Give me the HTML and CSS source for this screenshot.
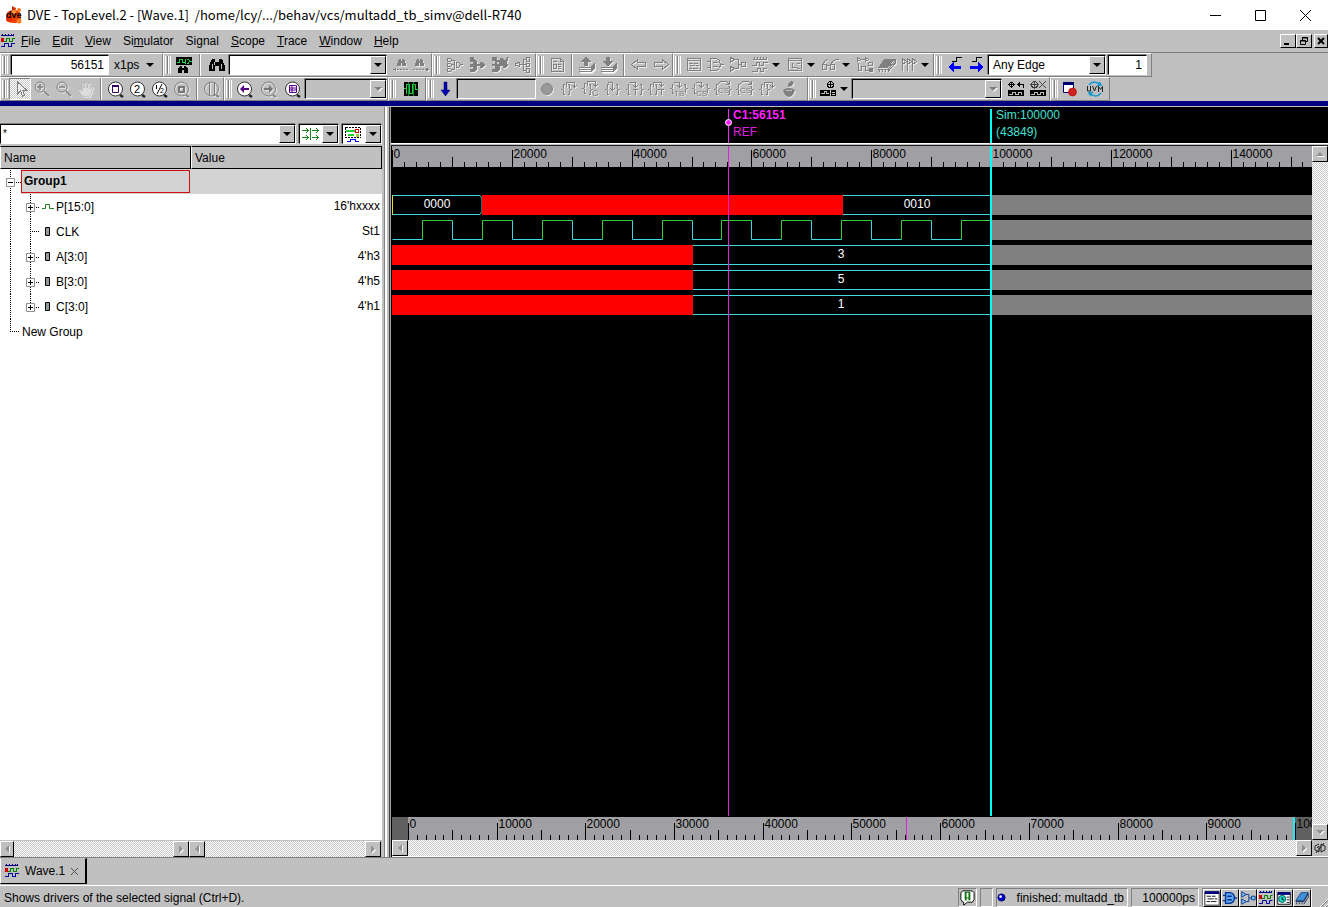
FILE: index.html
```html
<!DOCTYPE html>
<html lang="en">
<head>
<meta charset="utf-8">
<title>DVE - TopLevel.2 - [Wave.1]</title>
<link rel="stylesheet" href="styles.css">
</head>
<body>
<svg class="defs" aria-hidden="true">
  <defs>
    <symbol id="wave" viewBox="0 0 16 16"><path d="M1 2.500h13M2.500 1v2M5.500 1v2M8.500 1v2M11.500 1v2M13.500 1v2" stroke="#000080"/><path d="M1 5h3v4H1z" fill="#d00000"/><path d="M4 8.500h2.500V5.500h3v3h3V5.500h2" stroke="#008000" fill="none"/><path d="M1 13.500h3.500v-3h4v3h3v-3h3" stroke="#0000a0" fill="none"/></symbol>
    <symbol id="find" viewBox="0 0 20 20"><path d="M2 2h16v8H2z"/><path d="M3 7.500h2.500V4.500h3v3h3M11.500 3.500v5M12.500 4.500h2l1 1.500-1 2h-2M16 6.500h2" stroke="#20d040" fill="none"/><path d="M4 18v-4l2-3h2v2h2v-2h2l2 3v4h-4v-3H8v3z"/></symbol>
    <symbol id="bino" viewBox="0 0 20 20"><path d="M2 16v-5l3-7h3v3h4V4h3l3 7v5h-6v-5H8v5z"/><path d="M5.500 9v5M14.500 9v5M7.500 7v3" stroke="#c0c0c0"/></symbol>
    <symbol id="binol" viewBox="0 0 20 20"><path d="M6 9l2-5h2v2h1V4h2l2 5v2h-4V8h-1v3H6z"/><path d="M2 14.500l3-2v4z"/><path d="M3 14.500h14" stroke-dasharray="2 1" stroke="currentColor"/></symbol>
    <symbol id="binor" viewBox="0 0 20 20"><path d="M4 9l2-5h2v2h1V4h2l2 5v2H9V8H8v3H4z"/><path d="M18 14.500l-3-2v4z"/><path d="M2 14.500h14" stroke-dasharray="2 1" stroke="currentColor"/></symbol>
    <symbol id="fan1" viewBox="0 0 20 20"><path d="M3.500 3.500h3l1 1.500-1 1.500h-3zM3.500 8.500h3l1 1.500-1 1.500h-3zM3.500 13.500h3l1 1.500-1 1.500h-3zM8 5.500h2.500v9H8M8 9.500h3M12.500 7.500h2l2 2-2 3h-2zM17 9.500h2" fill="none" stroke="currentColor"/></symbol>
    <symbol id="fan2" viewBox="0 0 20 20"><path d="M3 2h4l1 3 2 1v3h3V7h3l2 3-2 3h-3v-2h-3v3l-2 2v1H3v-3h3v-2H3V9h3V7H3z"/></symbol>
    <symbol id="fan3" viewBox="0 0 20 20"><path d="M2 2h5v3h3V3h3l2 3 2-4h2l-2 5 1 3-2 3h-3v-2h-3v3l-2 3H2v-3h3v-3H2V9h3V6H2z"/><path d="M7 7h2v2H7z" fill="#d0d0d0"/></symbol>
    <symbol id="fan4" viewBox="0 0 20 20"><path d="M2.500 8.500l4-1v4l-4-1zM7 9.500h4M10.500 4v12M11 4.500h2M11 9.500h2M11 15.500h2M13.500 2.500h3v4h-3zM13.500 8.500h3v3h-3zM13.500 13.500h3v4h-3z" fill="none" stroke="currentColor"/></symbol>
    <symbol id="doc" viewBox="0 0 20 20"><path d="M4.500 3.500h9l3 3v10h-12zM13.500 3v3.500h3M6 6.500h4M6.500 9.500h3v4h-3zM11 9.500h3M11 11.500h3M11 13.500h3" fill="none" stroke="currentColor"/></symbol>
    <symbol id="up" viewBox="0 0 20 20"><path d="M9 2l6 5h-4v4H7V7H3z"/><path d="M3 13.500h11l4-4M3 15.500h11l4-4M3 17.500h11l4-4" fill="none" stroke="#fff"/><path d="M2 12.500h12l4-4M2 14.500h12l4-4M2 16.500h12l4-4" fill="none" stroke="currentColor"/></symbol>
    <symbol id="down" viewBox="0 0 20 20"><path d="M7 2h4v4h4l-6 5-6-5h4z"/><path d="M3 13.500h11l4-4M3 15.500h11l4-4M3 17.500h11l4-4" fill="none" stroke="#fff"/><path d="M2 12.500h12l4-4M2 14.500h12l4-4M2 16.500h12l4-4" fill="none" stroke="currentColor"/></symbol>
    <symbol id="left" viewBox="0 0 20 20"><path d="M8.500 4.500l-6 5 6 5v-3h8v-4h-8z" fill="none" stroke="currentColor"/></symbol>
    <symbol id="right" viewBox="0 0 20 20"><path d="M11.500 4.500l6 5-6 5v-3h-8v-4h8z" fill="none" stroke="currentColor"/></symbol>
    <symbol id="list" viewBox="0 0 20 20"><path d="M3.500 3.500h13v12h-13z" fill="none" stroke="currentColor"/><path d="M3 5.500h13M5 8.500h4M10 8.500h4M6 10.500h5M12 10.500h3M5 13.500h3M9 13.500h5" stroke="currentColor"/></symbol>
    <symbol id="gate" viewBox="0 0 20 20"><path d="M4.500 3.500h6l3 2 1 4-1 4-3 2h-6zM1 6.500h4M1 12.500h4M15 9.500h3M7 7.500h5M7 11.500h5" fill="none" stroke="currentColor"/></symbol>
    <symbol id="mux" viewBox="0 0 20 20"><path d="M2.500 2.500l4 2-4 3zM2.500 11.500l4 2-4 3zM7 4.500h3.500v9H7M11 9.500h2M13.500 7.500h4v4h-4z" fill="none" stroke="currentColor"/></symbol>
    <symbol id="waveg" viewBox="0 0 20 20"><path d="M3 4.500h14M4.500 2v3M7.500 2v3M10.500 2v3M13.500 2v3M16.500 2v3M2 10.500h4.500v-3h3v3h4v-3h4M2 16.500h5.500v-3h3v3h3v-3h3" fill="none" stroke="currentColor"/></symbol>
    <symbol id="clock" viewBox="0 0 20 20"><path d="M3.500 3.500h13v12h-13zM3 5.500h13M7.500 8v4h4M12 8.500h3M12 13.500h3" fill="none" stroke="currentColor"/></symbol>
    <symbol id="glasses" viewBox="0 0 20 20"><path d="M8 4.500L5 6l-2.500 4v4h4V9.500h-4M16 4.500L13 6l-2.500 4v4h4V9.500h-4M7 10.500h3M15.500 4.500h3" fill="none" stroke="currentColor"/></symbol>
    <symbol id="path" viewBox="0 0 20 20"><path d="M2.500 2.500l3 2-3 2zM6 4.500h4M10.500 2.500l3 2-3 2zM3.500 8v7h3v-4h4v4h3M13.500 7.500h4v3h-4z" fill="none" stroke="currentColor"/><path d="M14 13h4v4h-4z"/></symbol>
    <symbol id="chip" viewBox="0 0 20 20"><path d="M7 4h11l-7 9H1z"/><path d="M1 14.500h10l7-9v3l-7 8v-2M2.500 15v2M5.500 15v2M8.500 15v2" fill="none" stroke="currentColor"/></symbol>
    <symbol id="flags" viewBox="0 0 20 20"><path d="M3.500 16V3.500l4 3-4 3M8.500 16V3.500l4 3-4 3M13.500 16V3.500l4 3-4 3" fill="none" stroke="currentColor"/></symbol>
    <symbol id="edgel" viewBox="0 0 20 20"><path d="M7 6.500h4.500v-4h5" fill="none" stroke="#000"/><path d="M3 12l6-5v4h7v3H9v3z" fill="#00f"/></symbol>
    <symbol id="edger" viewBox="0 0 20 20"><path d="M5 6.500h4.500v-4h5" fill="none" stroke="#000"/><path d="M17 12l-6-5v4H3v3h8v3z" fill="#00f"/></symbol>
    <symbol id="pointer" viewBox="0 0 20 20"><path d="M7.500 3v12l3-3 2 5 2-1-2-5h4z" fill="#eee" stroke="currentColor"/></symbol>
    <symbol id="zin" viewBox="0 0 20 20"><circle cx="8" cy="8" r="5" fill="none" stroke="currentColor"/><path d="M5 8h6M8 5v6M12 12l5 5" stroke="currentColor" stroke-width="1.600"/></symbol>
    <symbol id="zout" viewBox="0 0 20 20"><circle cx="8" cy="8" r="5" fill="none" stroke="currentColor"/><path d="M5 8h6M12 12l5 5" stroke="currentColor" stroke-width="1.600"/></symbol>
    <symbol id="hand" viewBox="0 0 20 20"><path d="M6 17l-4-6 2-1 2 2V4h2v5l1-6h2v6l1-5h2v6l1-3 2 1-2 7-2 3z" fill="#ddd" stroke="#aaa" stroke-width=".6"/></symbol>
    <symbol id="mag" viewBox="0 0 20 20"><circle cx="9.500" cy="10" r="7" fill="#fff" stroke="#333"/><path d="M14 16l3 2" stroke="#222" stroke-width="2.500"/></symbol>
    <symbol id="magoff" viewBox="0 0 20 20"><circle cx="9.500" cy="10" r="7" fill="none" stroke="#808080"/><path d="M14 16l3 2" stroke="#808080" stroke-width="2"/></symbol>
    <symbol id="mbox" viewBox="0 0 20 20"><use href="#mag"/><path d="M6.500 6.500h6v7h-6z" fill="none" stroke="#306"/><path d="M6 7h7" stroke="#306" stroke-width="2"/></symbol>
    <symbol id="mtwo" viewBox="0 0 20 20"><use href="#mag"/><text x="6" y="14" font-size="11">2</text></symbol>
    <symbol id="mhalf" viewBox="0 0 20 20"><use href="#mag"/><path d="M12 5l-5 10M6.500 6v4" stroke="#000"/><text x="10" y="14" font-size="7">2</text></symbol>
    <symbol id="msq" viewBox="0 0 20 20"><use href="#magoff"/><path d="M7 8h5v5H7z" fill="none" stroke="#777" stroke-width="2"/></symbol>
    <symbol id="mbars" viewBox="0 0 20 20"><use href="#magoff"/><path d="M7.500 3v14M12.500 3v14" stroke="#777"/></symbol>
    <symbol id="mleft" viewBox="0 0 20 20"><use href="#mag"/><path d="M5 10l4-4v3h5v2H9v3z" fill="#508"/></symbol>
    <symbol id="mright" viewBox="0 0 20 20"><use href="#magoff"/><path d="M14 10l-4-4v3H5v2h5v3z" fill="#777"/></symbol>
    <symbol id="mlist" viewBox="0 0 20 20"><use href="#mag"/><path d="M6.500 6.500h7v7h-7zM6 9h8M6 11h8M9 6v8" fill="none" stroke="#508"/></symbol>
    <symbol id="green" viewBox="0 0 20 20"><path d="M3 3h14v14H3z"/><path d="M3 9.500h2.500v-4h3v9h3v-9h3v5h3M5.500 9v6M11.500 5v9" fill="none" stroke="#20d030"/><path d="M7.500 3v14M12.500 3v14" stroke="#084"/></symbol>
    <symbol id="bluedown" viewBox="0 0 20 20"><path d="M8 3h3v8h3l-4.500 6L5 11h3z" fill="#0000b0" stroke="#000060" stroke-width=".5"/></symbol>
    <symbol id="dot" viewBox="0 0 20 20"><circle cx="10" cy="10" r="5.500" fill="#999" stroke="#808080"/></symbol>
    <symbol id="s1" viewBox="0 0 20 20"><path d="M6 5.500H4.500v4l-1.500 1 1.500 1v4H6M9 5.500h1.500v4l1.500 1-1.500 1v4H9M7.500 8V3.500h8V8M13 6l2.500 2.500L18 6" fill="none" stroke="currentColor"/></symbol>
    <symbol id="s2" viewBox="0 0 20 20"><path d="M5 4.500H3.500v4l-1.500 1 1.500 1v4H5M8 5.500h1.500v4l1.500 1-1.500 1v4H8M6.500 7V2.500h8V7M12 5l2.500 2.500L17 5" fill="none" stroke="currentColor"/><text x="11" y="17" font-size="9">C</text></symbol>
    <symbol id="s3" viewBox="0 0 20 20"><path d="M6 5.500H4.500v4l-1.500 1 1.500 1v4H6M13 5.500h1.500v4l1.500 1-1.500 1v4H13M4.500 3.500h5V12M7 9l2.500 2.500L12 9" fill="none" stroke="currentColor"/></symbol>
    <symbol id="s4" viewBox="0 0 20 20"><path d="M4 5.500H3.500v4l-1.500 1 1.500 1v4H5M15 5.500h1.500v4l1.500 1-1.500 1v4H15M4.500 3.500h6V8M8 6l2.500 2.500L13 6M8 10.500h5M10.500 10v6" fill="none" stroke="currentColor"/></symbol>
    <symbol id="s5" viewBox="0 0 20 20"><path d="M5 5.500H3.500v4l-1.500 1 1.500 1v4H5M8 5.500h1.500v4l1.500 1-1.500 1v4H8M6.500 8V3.500h8V7M12 5l2.500 2.500L17 5M12 10.500h5M14.500 10v6" fill="none" stroke="currentColor"/></symbol>
    <symbol id="s6" viewBox="0 0 20 20"><path d="M4 5.500H3.500v3l-1.500 1 1.500 1v4H5M15 5.500h1.500v3l1.500 1-1.500 1v3M4.500 3.500h6V8M8 6l2.500 2.500L13 6" fill="none" stroke="currentColor"/><text x="5" y="17" font-size="8">TB</text></symbol>
    <symbol id="s7" viewBox="0 0 20 20"><path d="M4 5.500H3.500v3l-1.500 1 1.500 1v4H5M15 5.500h1.500v3l1.500 1-1.500 1v3M4.500 3.500h6V8M8 6l2.500 2.500L13 6" fill="none" stroke="currentColor"/><text x="5" y="17" font-size="8">CS</text></symbol>
    <symbol id="s8" viewBox="0 0 20 20"><path d="M5 5.500H3.500v4l-1.500 1 1.500 1v4H5M15 7.500h1.500v2l1.500 1-1.500 1v4H15M5 4.500l3-2h5l3 2M13 5.500h3.500V2" fill="none" stroke="currentColor"/><text x="5" y="14" font-size="8">CS</text></symbol>
    <symbol id="bird" viewBox="0 0 20 20"><path d="M4 11q6-4 12 0-2 7-6 7t-6-7M9 8V5l3-3 3 1-2 4z"/><path d="M7 11.500h6" stroke="#c0c0c0"/></symbol>
    <symbol id="addwave" viewBox="0 0 20 20"><circle cx="12.500" cy="5.500" r="3" fill="none" stroke="#000"/><path d="M9 5.500h7M12.500 2v7" stroke="#000"/><path d="M2 11h10v6H2zM13 11h5v6h-5z"/><path d="M3 14.500h3v-2h2v2h3M14 13.500h3M14 15.500h3" fill="none" stroke="#bbb"/></symbol>
    <symbol id="wback" viewBox="0 0 20 20"><circle cx="5.500" cy="5.500" r="2" fill="none" stroke="#000"/><path d="M2 5.500h7M5.500 3v6M11 5.500h6.500V9M13.500 3v5M12.500 4v3" fill="none" stroke="#000"/><path d="M2 11h16v6H2z"/><path d="M3 15.500h3v-2h3v2h3v-2h3v2" fill="none" stroke="#bbb"/></symbol>
    <symbol id="wdel" viewBox="0 0 20 20"><circle cx="6.500" cy="5.500" r="3" fill="none" stroke="#333"/><path d="M2 5.500h9M6.500 2v8M11 2l7 7M18 2l-7 7" fill="none" stroke="#444"/><path d="M2 11h16v6H2z"/><path d="M3 15.500h3v-2h3v2h3v-2h3v2" fill="none" stroke="#bbb"/></symbol>
    <symbol id="redwin" viewBox="0 0 20 20"><path d="M3.500 3.500h10v10h-10z" fill="#fff" stroke="#000070"/><path d="M3 4.500h11" stroke="#000070" stroke-width="3"/><circle cx="12.500" cy="13" r="4" fill="#d02020" stroke="#a00" stroke-width=".6"/></symbol>
    <symbol id="uvm" viewBox="0 0 20 20"><path d="M4 6q5-6 11 0M14 3l2 3-4 1M16 14q-5 6-11 0M6 17l-2-3 4-1" fill="none" stroke="#1898d0" stroke-width="1.600"/><path d="M2.500 7v5h3V7M7.500 7l2 5 2-5M13.500 13V7.500l2 3 2-3V13" fill="none" stroke="#222"/></symbol>
    <symbol id="arrows" viewBox="0 0 20 16"><path d="M2 4.500h6M6 2l2.500 2.500L6 7M2 11.500h6M6 9l2.500 2.500L6 14M10.500 2v12M12 4.500h6M16 2l2.500 2.500L16 7M12 11.500h6M16 9l2.500 2.500L16 14" fill="none" stroke="#188018"/></symbol>
    <symbol id="filter" viewBox="0 0 20 16"><path d="M2.500 1.500h15v10h-15z" fill="none" stroke="#000" stroke-dasharray="2 1"/><path d="M3 4h9v2H3zM5 8h6v2H5z" fill="#20d030"/><path d="M12.500 3.500h3v3h-3z" fill="none" stroke="#d00"/><path d="M13 8h3v3h-3z" fill="#9c3"/><path d="M4 15.500h3.500v-2h5v2H16" fill="none" stroke="#00f"/></symbol>
  </defs>
</svg>

<header class="titlebar">
  <svg class="logo" viewBox="0 0 18 18" aria-hidden="true"><path d="M9 4q7 0 7 7 0 6-7 6-8 0-8-6 0-7 8-7z" fill="#f04000"/><path d="M7 0l4 2-1 4-3-1z" fill="#d33000"/><circle cx="4" cy="13" r="3" fill="#e83000"/><circle cx="14" cy="15" r="2.500" fill="#ff7a20"/><circle cx="14" cy="4" r="2" fill="#ff7a20"/><circle cx="9" cy="6" r="2" fill="#ffa040"/><text x="1" y="12" font-size="9" font-weight="bold">dve</text></svg>
  <h1 class="title">DVE - TopLevel.2 - [Wave.1] &nbsp;/home/lcy/.../behav/vcs/multadd_tb_simv@dell-R740</h1>
  <div class="winctl">
    <button aria-label="Minimize"><svg viewBox="0 0 11 11"><path d="M0 5.500h11"/></svg></button>
    <button aria-label="Maximize"><svg viewBox="0 0 11 11"><path d="M.5.500h10v10H.5z"/></svg></button>
    <button aria-label="Close"><svg viewBox="0 0 11 11"><path d="M0 0l11 11M11 0L0 11"/></svg></button>
  </div>
</header>

<nav class="menubar" aria-label="Main menu">
  <svg class="i16" aria-hidden="true"><use href="#wave"/></svg>
  <div class="menus">
    <button><u>F</u>ile</button><button><u>E</u>dit</button><button><u>V</u>iew</button><button>Si<u>m</u>ulator</button><button>Si<u>g</u>nal</button><button><u>S</u>cope</button><button><u>T</u>race</button><button><u>W</u>indow</button><button><u>H</u>elp</button>
  </div>
  <div class="mdi">
    <button aria-label="Minimize document"><svg viewBox="0 0 10 10"><path d="M1 8h5" stroke-width="2"/></svg></button>
    <button aria-label="Restore document"><svg viewBox="0 0 10 10"><path d="M3.500 4V1.500h5v4H6M3 2h6M1.500 4.500h5v4h-5zM1 5h6"/></svg></button>
    <button class="last" aria-label="Close document"><svg viewBox="0 0 10 10"><path d="M2 2l6 6M8 2L2 8" stroke-width="2"/></svg></button>
  </div>
</nav>

<div class="toolbars">
  <div class="toolrow upper">
    <div class="group"><span class="grip"></span><input class="field time" aria-label="Time" value="56151"><button class="unit">x1ps<span class="tri"></span></button></div>
    <div class="group"><span class="grip"></span><button class="btn" aria-label="Find signal"><svg><use href="#find"/></svg></button><span class="sep roomy"></span><button class="btn wide" aria-label="Find"><svg><use href="#bino"/></svg></button><span class="combo find"><select aria-label="Search text"><option></option></select><span class="drop"><span class="tri"></span></span></span><span class="gap"></span><button class="btn slim off" aria-label="Find previous"><svg><use href="#binol"/></svg></button><button class="btn slim off" aria-label="Find next"><svg><use href="#binor"/></svg></button></div>
    <div class="group loose"><span class="grip"></span><button class="btn off" aria-label="Drivers"><svg><use href="#fan1"/></svg></button><button class="btn off" aria-label="Loads"><svg><use href="#fan2"/></svg></button><button class="btn off" aria-label="Drivers and loads"><svg><use href="#fan3"/></svg></button><button class="btn off" aria-label="Connections"><svg><use href="#fan4"/></svg></button></div>
    <div class="group"><span class="grip"></span><button class="btn off" aria-label="Edit source"><svg><use href="#doc"/></svg></button><span class="sep"></span><button class="btn off" aria-label="Move up"><svg><use href="#up"/></svg></button><button class="btn off" aria-label="Move down"><svg><use href="#down"/></svg></button><span class="sep"></span><button class="btn off" aria-label="Back"><svg><use href="#left"/></svg></button><button class="btn off" aria-label="Forward"><svg><use href="#right"/></svg></button></div>
    <div class="group"><span class="grip"></span><button class="btn off" aria-label="Source"><svg><use href="#list"/></svg></button><button class="btn off" aria-label="Schematic"><svg><use href="#gate"/></svg></button><button class="btn off" aria-label="Path schematic"><svg><use href="#mux"/></svg></button><button class="btn off" aria-label="Wave"><svg><use href="#waveg"/></svg></button><button class="arrow" aria-label="Wave options"><span class="tri"></span></button><button class="btn off" aria-label="List"><svg><use href="#clock"/></svg></button><button class="arrow" aria-label="List options"><span class="tri"></span></button><button class="btn off" aria-label="Watch"><svg><use href="#glasses"/></svg></button><button class="arrow" aria-label="Watch options"><span class="tri"></span></button><button class="btn off" aria-label="Add to path"><svg><use href="#path"/></svg></button><button class="btn off" aria-label="Memory"><svg><use href="#chip"/></svg></button><button class="btn off" aria-label="Markers"><svg><use href="#flags"/></svg></button><button class="arrow" aria-label="Marker options"><span class="tri"></span></button></div>
    <div class="group end"><span class="grip"></span><button class="btn" aria-label="Previous edge"><svg><use href="#edgel"/></svg></button><button class="btn" aria-label="Next edge"><svg><use href="#edger"/></svg></button><span class="combo edge"><select aria-label="Edge type"><option>Any Edge</option></select><span class="drop"><span class="tri"></span></span></span><input class="field count" aria-label="Edge count" value="1"></div>
  </div>
  <div class="toolrow">
    <div class="group"><span class="grip"></span><button class="btn off pressed" aria-label="Select"><svg><use href="#pointer"/></svg></button><button class="btn off" aria-label="Zoom in"><svg class="smooth"><use href="#zin"/></svg></button><button class="btn off" aria-label="Zoom out"><svg class="smooth"><use href="#zout"/></svg></button><button class="btn off" aria-label="Pan"><svg class="smooth"><use href="#hand"/></svg></button><span class="sep"></span><button class="btn" aria-label="Zoom full"><svg class="smooth"><use href="#mbox"/></svg></button><button class="btn" aria-label="Zoom in 2x"><svg class="smooth"><use href="#mtwo"/></svg></button><button class="btn" aria-label="Zoom out 2x"><svg class="smooth"><use href="#mhalf"/></svg></button><button class="btn off" aria-label="Zoom selection"><svg class="smooth"><use href="#msq"/></svg></button><span class="sep"></span><button class="btn off" aria-label="Zoom between cursors"><svg class="smooth"><use href="#mbars"/></svg></button></div>
    <div class="group"><span class="grip"></span><button class="btn wide" aria-label="Zoom back"><svg class="smooth"><use href="#mleft"/></svg></button><button class="btn wide off" aria-label="Zoom forward"><svg class="smooth"><use href="#mright"/></svg></button><button class="btn wide" aria-label="Named zooms"><svg class="smooth"><use href="#mlist"/></svg></button><span class="combo zoom dim"><select aria-label="Zoom name"><option></option></select><span class="drop"><span class="tri"></span></span></span></div>
    <div class="group"><span class="grip"></span><button class="btn broad" aria-label="Compare waves"><svg><use href="#green"/></svg></button></div>
    <div class="group steps"><span class="grip"></span><button class="btn" aria-label="Start"><svg class="smooth"><use href="#bluedown"/></svg></button><input class="field run" aria-label="Run time"><button class="btn off" aria-label="Stop"><svg class="smooth"><use href="#dot"/></svg></button><button class="btn off" aria-label="Next"><svg><use href="#s1"/></svg></button><button class="btn off" aria-label="Step in C"><svg><use href="#s2"/></svg></button><button class="btn off" aria-label="Step"><svg><use href="#s3"/></svg></button><button class="btn off" aria-label="Step in thread"><svg><use href="#s4"/></svg></button><button class="btn off" aria-label="Next in thread"><svg><use href="#s5"/></svg></button><button class="btn off" aria-label="Next in testbench"><svg><use href="#s6"/></svg></button><button class="btn off" aria-label="Step constraint solver"><svg><use href="#s7"/></svg></button><button class="btn off" aria-label="Next constraint solver"><svg><use href="#s8"/></svg></button><button class="btn off" aria-label="Repeat constraint solver"><svg><use href="#s8"/></svg></button><button class="btn off" aria-label="Step out"><svg><use href="#s1"/></svg></button><button class="btn off" aria-label="Restore"><svg class="smooth"><use href="#bird"/></svg></button></div>
    <div class="group"><span class="grip"></span><button class="btn" aria-label="Add group"><svg><use href="#addwave"/></svg></button><button class="arrow" aria-label="Group options"><span class="tri"></span></button><span class="combo scope dim"><select aria-label="Scope"><option></option></select><span class="drop"><span class="tri"></span></span></span><button class="btn" aria-label="Restore group"><svg><use href="#wback"/></svg></button><button class="btn" aria-label="Delete group"><svg><use href="#wdel"/></svg></button></div>
    <div class="group"><span class="grip"></span><button class="btn" aria-label="Breakpoints"><svg class="smooth"><use href="#redwin"/></svg></button><button class="btn broad" aria-label="UVM"><svg class="smooth"><use href="#uvm"/></svg></button></div>
  </div>
</div>

<main class="work">
  <section class="signals" aria-label="Signals">
    <div class="filters">
      <span class="combo name"><select aria-label="Signal filter"><option>*</option></select><span class="drop"><span class="tri"></span></span></span>
      <button class="pick" aria-label="Direction filter"><svg><use href="#arrows"/></svg><span class="drop"><span class="tri"></span></span></button>
      <button class="pick" aria-label="Type filter"><svg><use href="#filter"/></svg><span class="drop"><span class="tri"></span></span></button>
    </div>
    <div class="treewrap">
    <table class="tree">
      <thead><tr><th>Name</th><th>Value</th></tr></thead>
      <tbody>
        <tr class="grouprow"><td><div class="cell"><svg class="tw0" viewBox="0 0 21 25"><path class="dots" d="M10.500 1v24M16 13.500h5"/><path class="pm" d="M6.500 9.500h8v8h-8z"/><path class="sg" d="M8 13.500h5"/></svg><b class="groupname">Group1</b></div></td><td></td></tr>
        <tr><td><div class="cell"><svg class="tw" viewBox="0 0 56 25"><path class="dots" d="M10.500 0v25M30.500 0v25M36 13.500h4"/><path class="pm" d="M26.500 9.500h8v8h-8z"/><path class="sg" d="M28 13.500h5M30.500 11v5"/><path d="M42 14.500h3.500v-4h4v4H54" fill="none" stroke="#208020"/></svg>P[15:0]</div></td><td class="val">16'hxxxx</td></tr>
        <tr><td><div class="cell"><svg class="tw" viewBox="0 0 56 25"><path class="dots" d="M10.500 0v25M30.500 0v25M32 12.500h8"/><path class="port" d="M45.500 8.500h4v8h-4z"/></svg>CLK</div></td><td class="val">St1</td></tr>
        <tr><td><div class="cell"><svg class="tw" viewBox="0 0 56 25"><path class="dots" d="M10.500 0v25M30.500 0v25M36 13.500h4"/><path class="pm" d="M26.500 9.500h8v8h-8z"/><path class="sg" d="M28 13.500h5M30.500 11v5"/><path class="port" d="M45.500 8.500h4v8h-4z"/></svg>A[3:0]</div></td><td class="val">4'h3</td></tr>
        <tr><td><div class="cell"><svg class="tw" viewBox="0 0 56 25"><path class="dots" d="M10.500 0v25M30.500 0v25M36 13.500h4"/><path class="pm" d="M26.500 9.500h8v8h-8z"/><path class="sg" d="M28 13.500h5M30.500 11v5"/><path class="port" d="M45.500 8.500h4v8h-4z"/></svg>B[3:0]</div></td><td class="val">4'h5</td></tr>
        <tr><td><div class="cell"><svg class="tw" viewBox="0 0 56 25"><path class="dots" d="M10.500 0v25M30.500 0v12M36 13.500h4"/><path class="pm" d="M26.500 9.500h8v8h-8z"/><path class="sg" d="M28 13.500h5M30.500 11v5"/><path class="port" d="M45.500 8.500h4v8h-4z"/></svg>C[3:0]</div></td><td class="val">4'h1</td></tr>
        <tr><td><div class="cell"><svg class="tw0" viewBox="0 0 21 25"><path class="dots" d="M10.500 0v12M10 12.500h9"/></svg>New Group</div></td><td></td></tr>
      </tbody>
    </table>
    </div>
    <div class="hscrolls">
      <div class="hscroll"><button aria-label="Scroll names left"><span class="tl"></span></button><button aria-label="Scroll names right"><span class="tr"></span></button></div>
      <div class="hscroll"><button aria-label="Scroll values left"><span class="tl"></span></button><button aria-label="Scroll values right"><span class="tr"></span></button></div>
    </div>
  </section>
  <div class="splitter"></div>
  <section class="waves" aria-label="Waveforms">
    <svg class="cursors">
      <path d="M336.500 2V36" stroke="#ff20ff"/><circle cx="336.500" cy="15.500" r="3" fill="#ff20ff" stroke="#fff"/>
      <text x="341" y="12" fill="#ff20ff" font-weight="bold">C1:56151</text><text x="341" y="29" fill="#e020e0">REF</text>
      <path d="M599 2V36" stroke="#00ffff" stroke-width="2"/>
      <text x="604" y="12" fill="#40e0d0">Sim:100000</text><text x="604" y="29" fill="#40e0d0">(43849)</text>
    </svg>
    <div class="rule"></div>
    <div class="plotrow">
      <div class="plotcol">
        <svg class="plot" id="plot">
          <rect width="100%" height="21" fill="#a0a0a4"/>
          <g id="timescale"></g>
          <g fill="#808080"><rect x="600" y="49" width="100%" height="20"/><rect x="600" y="74" width="100%" height="20"/><rect x="600" y="99" width="100%" height="20"/><rect x="600" y="124" width="100%" height="20"/><rect x="600" y="149" width="100%" height="20"/></g>
          <path d="M0 49.500h88l2 3v13l-2 3H0M451 49.500h148M451 68.500h148M301 99.500h298M301 118.500h298M301 124.500h298M301 143.500h298M301 149.500h298M301 168.500h298" fill="none" stroke="#40d8e0"/>
          <path d="M.5 49v20" stroke="#e0e020"/>
          <g fill="#f00"><rect x="90" y="49" width="361" height="20"/><rect y="99" width="301" height="20"/><rect y="124" width="301" height="20"/><rect y="149" width="301" height="20"/></g>
          <g id="clock-trace"></g>
          <g fill="#fff" text-anchor="middle"><text x="45" y="62">0000</text><text x="525" y="62">0010</text><text x="449" y="112">3</text><text x="449" y="137">5</text><text x="449" y="162">1</text></g>
          <path d="M336.500 0V2000" stroke="#e020e0"/><path d="M599 0V2000" stroke="#00ffff" stroke-width="2"/>
        </svg>
        <svg class="overview" id="overview"></svg>
      </div>
      <div class="vscroll"><button aria-label="Scroll up"><span class="tu"></span></button><button aria-label="Scroll down"><span class="td"></span></button></div>
    </div>
    <div class="bottomrow">
      <div class="hscroll"><button aria-label="Scroll waves left"><span class="tl"></span></button><button aria-label="Scroll waves right"><span class="tr"></span></button></div>
      <button class="corner" aria-label="Link views"><svg viewBox="0 0 14 14"><path d="M6 3L2 5v4l4 2V5L4 7M8 3l4 2v4l-4 2V3M3 12L11 2" fill="none" stroke="#222"/></svg></button>
    </div>
  </section>
</main>

<div class="tabs">
  <div class="tab"><svg class="i16" aria-hidden="true"><use href="#wave"/></svg><span>Wave.1</span><button aria-label="Close tab"><svg viewBox="0 0 9 9"><path d="M1 1l7 7M8 1L1 8"/></svg></button></div>
</div>

<footer class="status">
  <span class="msg">Shows drivers of the selected signal (Ctrl+D).</span>
  <button class="note" aria-label="Messages"><svg viewBox="0 0 18 18"><path d="M4 2h10l2 2v7l-2 3H9l-4 3v-3H4l-2-3V4z" fill="#fff" stroke="#000"/><path d="M6 3h6v9H6z" fill="#107010"/><path d="M9 4v5M9 10v2" stroke="#fff" stroke-width="2"/></svg></button>
  <span class="panel blank"></span>
  <span class="panel state"><svg viewBox="0 0 10 10"><circle cx="5" cy="5" r="4" fill="#0000d0" stroke="#000060"/><circle cx="4" cy="4" r="1.500" fill="#fff"/></svg><span>finished: multadd_tb</span></span>
  <span class="panel now">100000ps</span>
  <span class="views">
    <button aria-label="Source view"><svg viewBox="0 0 18 18"><path d="M1 2h16v15H1z" fill="#fff" stroke="#333"/><path d="M1 3h16" stroke="#000080" stroke-width="3"/><path d="M3 7h5M9 7h4M4 10h7M12 10h3M3 13h4M8 13h6" stroke="#000"/></svg></button>
    <button aria-label="Schematic view"><svg viewBox="0 0 18 18"><path d="M4 3h5q5 1 5 6t-5 6H4z" fill="#60a8f0" stroke="#003090" stroke-width="1.500"/><path d="M1 6h3M1 12h3M14 9h3M6 7h5M6 11h5" stroke="#003090" stroke-width="1.500"/></svg></button>
    <button aria-label="Path view"><svg viewBox="0 0 18 18"><path d="M2 2l5 3-5 3zM2 10l5 3-5 3zM13 7h4v4h-4z" fill="#80c8f8" stroke="#003090"/><path d="M7 5h3v8H7M10 9h3" fill="none" stroke="#003090"/></svg></button>
    <button aria-label="Wave view"><svg><use href="#wave"/></svg></button>
    <button aria-label="List view"><svg viewBox="0 0 18 18"><path d="M2 3h14v13H2z" fill="#fff" stroke="#000"/><path d="M2 4h14" stroke="#000080" stroke-width="3"/><circle cx="7" cy="10" r="4" fill="#20d8c8" stroke="#055"/><path d="M7 8v3h2M12 8h3M12 11h3M12 14h3" fill="none" stroke="#000"/></svg></button>
    <button aria-label="Memory view"><svg viewBox="0 0 18 18"><path d="M8 3h8l-5 9H2z" fill="#4090d8" stroke="#124080"/><path d="M2 13h9l5-9v4l-5 8M3 14v2M6 14v2M9 14v2" fill="none" stroke="#102850"/></svg></button>
  </span>
  <svg class="sizer" viewBox="0 0 14 14" aria-hidden="true"><path d="M6 14l8-8M11 14l3-3" stroke="#fff"/><path d="M7 14l7-7M12 14l2-2" stroke="#808080"/></svg>
</footer>
<script src="app.js"></script>
</body>
</html>
```

FILE: styles.css
```css
* { box-sizing: border-box; }
html, body { height: 100%; }
body {
  margin: 0;
  display: flex;
  flex-direction: column;
  overflow: hidden;
  background: #c0c0c0;
  color: #000;
  font: 12px/16px "Liberation Sans", Arial, sans-serif;
}
button, input, select { font: inherit; color: inherit; margin: 0; border-radius: 0; }
button { padding: 0; border: 0; background: none; }
svg { display: block; flex: none; }
svg text { font-family: "Liberation Sans", Arial, sans-serif; }
.defs { position: absolute; width: 0; height: 0; }
.i16 { width: 16px; height: 16px; shape-rendering: crispEdges; }

.titlebar { display: flex; align-items: center; flex: none; height: 30px; padding-left: 5px; background: #fff; }
.logo { width: 18px; height: 18px; }
.title { flex: 1; margin: 0 0 0 4px; font: 13px/16px "Noto Sans CJK SC", "Noto Sans", sans-serif; white-space: nowrap; }
.winctl { display: flex; height: 28px; }
.winctl button { display: grid; place-items: center; width: 45px; }
.winctl svg { width: 11px; height: 11px; fill: none; stroke: #000; }

.menubar { display: flex; align-items: center; flex: none; height: 23px; border-bottom: 1px solid #808080; }
.menus { display: flex; flex: 1; margin-left: -1px; }
.menus button { padding: 0 6px; }
.mdi { display: flex; }
.mdi button { display: grid; place-items: center; width: 16px; height: 14px; border: 1px solid; border-color: #fff #000 #000 #fff; }
.mdi .last { margin-left: 2px; width: 14px; }
.mdi svg { width: 10px; height: 10px; fill: none; stroke: #000; }

.toolbars { flex: none; border-bottom: 5px solid #000080; }
.toolrow { display: flex; height: 24px; }
.group { display: flex; align-items: center; border: 1px solid; border-color: #fff #808080 #808080 #fff; }
.loose { gap: 1px; padding-right: 1px; }
.steps { padding-right: 7px; }
.end { padding-right: 4px; }
.grip { width: 6px; height: 18px; margin: 0 1px; border: solid #fff; border-width: 0 1px; background: linear-gradient(90deg, #c0c0c0 1px, #808080 1px 2px, #fff 2px 3px, #c0c0c0 3px); }
.upper .grip { margin-right: 2px; }
.sep { width: 2px; height: 22px; margin: 0 3px; border-left: 1px solid #808080; border-right: 1px solid #fff; }
.roomy { margin: 0 4px; }
.gap { width: 4px; }
.btn { display: grid; place-items: center; width: 22px; height: 22px; }
.btn svg { width: 20px; height: 20px; shape-rendering: crispEdges; }
.btn svg.smooth { shape-rendering: auto; }
.slim { width: 20px; }
.wide { width: 24px; }
.broad { width: 28px; }
.off { color: #808080; fill: #808080; filter: drop-shadow(1px 1px 0 #e8e8e8); }
.pressed { border: 1px solid; border-color: #808080 #fff #fff #808080; background: repeating-conic-gradient(#fff 0 25%, #c8c8c8 0 50%) 0 0 / 2px 2px; filter: none; }
.arrow { width: 10px; margin-right: 3px; display: grid; place-items: center; }
.tri { border: solid transparent; border-width: 4px 4px 0; border-top-color: #000; }
.unit { display: flex; align-items: center; gap: 7px; width: 53px; padding-left: 5px; }
.field, .combo, .pick { border: 1px solid; border-color: #000 #fff #fff #000; background: #fff; box-shadow: -1px -1px 0 #808080; }
.field { height: 20px; padding: 0 4px; text-align: right; }
.time { width: 98px; margin-left: 1px; }
.count { width: 39px; margin-left: 2px; }
.run { width: 79px; background: #c0c0c0; }
.combo { display: grid; height: 20px; grid-template-columns: 1fr 16px; }
.combo select { grid-area: 1 / 1 / 2 / 3; width: 100%; min-width: 0; height: 18px; padding: 0 16px 0 4px; border: 0; appearance: none; background: none; }
.drop { display: grid; place-items: center; width: 16px; height: 18px; background: #c0c0c0; border: 1px solid; border-color: #fff #000 #000 #fff; pointer-events: none; }
.combo .drop { grid-area: 1 / 2; }
.dim { background: #c0c0c0; }
.dim .tri { border-top-color: #808080; filter: drop-shadow(1px 1px 0 #fff); }
.find { width: 158px; }
.edge { width: 118px; }
.zoom { width: 82px; }
.scope { width: 150px; margin-right: 3px; }

.work { display: flex; flex: 1; min-height: 0; border-top: 1px solid #c0c0c0; border-bottom: 1px solid #808080; }
.signals { display: flex; flex-direction: column; width: 384px; padding-top: 17px; }
.filters { display: flex; gap: 3px; flex: none; height: 22px; padding-right: 2px; }
.name { flex: 1; }
.combo.name select { padding-left: 2px; font-size: 10px; }
.pick { display: flex; align-items: center; justify-content: space-between; width: 40px; height: 20px; }
.pick svg { width: 20px; height: 16px; shape-rendering: crispEdges; }
.treewrap { flex: 1; min-height: 0; margin-right: 2px; background: #fff; overflow: hidden; }
.tree { width: 100%; table-layout: fixed; border-collapse: separate; border-spacing: 0; }
.tree th { height: 23px; padding: 0 3px; text-align: left; font-weight: normal; background: #c0c0c0; border: 1px solid; border-color: #000 #000 #000 #fff; }
.tree th:first-child { width: 191px; }
.tree td { height: 25px; padding: 0; white-space: nowrap; }
.tree .val { text-align: right; padding: 0 2px 2px 0; }
.cell { display: flex; align-items: center; height: 25px; line-height: 14px; }
.grouprow { background: #d3d3d3; }
.groupname { flex: 1; height: 23px; padding: 0 2px; line-height: 20px; border: 1px solid #d01010; margin-right: 1px; }
.tw0 { width: 21px; height: 25px; margin-right: 1px; }
.grouprow .tw0 { margin-right: 0; background: #fff; }
.tw { width: 56px; height: 25px; }
.dots { fill: none; stroke: #000; stroke-dasharray: 1 1; }
.pm { fill: #fff; stroke: #909090; }
.sg { fill: none; stroke: #000; }
.port { fill: #909c94; stroke: #000; }
.hscrolls { display: flex; flex: none; height: 17px; padding: 1px 3px 0 0; }
.hscrolls .hscroll { flex: 1; }
.hscrolls .hscroll:first-child { flex: none; width: 189px; }
.hscrolls .hscroll:first-child button:first-child { width: 14px; }
.hscroll, .vscroll { display: flex; justify-content: space-between; background: repeating-conic-gradient(#fff 0 25%, #c8c8c8 0 50%) 0 0 / 2px 2px; }
.hscroll button, .vscroll button { display: grid; place-items: center; width: 16px; height: 16px; background: #c0c0c0; border: 1px solid; border-color: #fff #000 #000 #fff; }
.vscroll { flex-direction: column; width: 16px; flex: none; }
.tl, .tr, .tu, .td { border: 4px solid transparent; filter: drop-shadow(1px 1px 0 #fff); }
.tl { border-left-width: 0; border-right-color: #909090; }
.tr { border-right-width: 0; border-left-color: #909090; }
.tu { border-top-width: 0; border-bottom-color: #909090; }
.td { border-bottom-width: 0; border-top-color: #909090; }
.splitter { width: 7px; flex: none; background: linear-gradient(90deg, #808080 0 1px, #fff 1px 3px, #c0c0c0 3px 5px, #404040 5px 6px, #a0a0a0 6px); }

.waves { display: flex; flex-direction: column; flex: 1; min-width: 0; background: #000; padding-left: 1px; }
.waves svg { font-size: 12px; }
.cursors { width: 100%; height: 36px; }
.rule { flex: none; height: 3px; margin-left: -1px; background: linear-gradient(#fff 0 1px, #c0c0c0 1px 2px, #202020 2px); }
.plotrow { display: flex; flex: 1; min-height: 0; }
.plotcol { display: flex; flex-direction: column; flex: 1; min-width: 0; }
.plot { flex: 1; width: 100%; min-height: 0; border-bottom: 1px solid #000; }
.overview { width: 100%; height: 23px; background: #606060; }
.bottomrow { display: flex; flex: none; height: 17px; border-bottom: 1px solid #fff; background: #c0c0c0; }
.bottomrow .hscroll { flex: 1; }
.corner { display: grid; place-items: center; width: 16px; }
.corner svg { width: 14px; height: 14px; }

.tabs { flex: none; height: 28px; border-bottom: 1px solid #fff; }
.tab { display: inline-flex; align-items: center; height: 26px; padding: 0 6px 0 3px; border: 1px solid; border-color: #c0c0c0 #000 #000 #fff; border-right-width: 2px; }
.tab span { margin: 0 5px; }
.tab button svg { width: 9px; height: 9px; fill: none; stroke: #505050; }

.status { display: flex; align-items: center; flex: none; height: 21px; padding: 2px 0 0 4px; }
.msg { flex: 1; }
.note { display: grid; place-items: center; width: 19px; height: 19px; margin-right: 3px; border: 1px solid; border-color: #808080 #fff #fff #808080; }
.note svg { width: 17px; height: 17px; }
.panel { display: flex; align-items: center; height: 19px; margin-right: 3px; border: 1px solid; border-color: #808080 #fff #fff #808080; }
.blank { width: 13px; }
.state { width: 132px; justify-content: space-between; padding-right: 3px; }
.state svg { width: 9px; height: 9px; }
.now { width: 68px; justify-content: flex-end; padding-right: 3px; }
.views { display: flex; height: 19px; border: 1px solid; border-color: #808080 #fff #fff #808080; }
.views button { display: grid; place-items: center; width: 18px; height: 18px; border: 1px solid; border-color: #fff #000 #000 #fff; }
.views svg { width: 16px; height: 16px; }
.sizer { width: 14px; height: 14px; margin-left: 2px; align-self: flex-end; }
```

FILE: app.js
```js
const NS = "http://www.w3.org/2000/svg";

function add(parent, tag, attrs, text) {
  const el = document.createElementNS(NS, tag);
  for (const key in attrs) el.setAttribute(key, attrs[key]);
  if (text !== undefined) el.textContent = text;
  parent.appendChild(el);
}

/* Draws ticks and labels; `step` is the time between the smallest ticks. */
function drawScale(parent, opt) {
  let path = "";
  for (let i = 0; i * opt.step <= opt.end; i++) {
    const x = Math.round(opt.origin + i * opt.step * opt.scale) + 0.5;
    const height = i % 10 === 0 ? opt.major : i % 5 === 0 ? opt.middle : opt.minor;
    path += `M${x} ${opt.bottom}v-${height}`;
    if (i % 10 === 0) {
      add(parent, "text", { x: x + 1, y: opt.baseline, fill: "#000" }, String(i * opt.step));
    }
  }
  add(parent, "path", { d: path, stroke: "#000" });
}

function drawMain() {
  const group = document.getElementById("timescale");
  const width = document.getElementById("plot").clientWidth;
  const scale = 0.00599;
  group.replaceChildren();
  drawScale(group, { origin: 0, scale, step: 2000, end: width / scale, bottom: 21, major: 17, middle: 10, minor: 5, baseline: 12 });

  const trace = document.getElementById("clock-trace");
  trace.replaceChildren();
  for (let i = 0; i < 20; i++) {
    const x0 = Math.round(i * 5000 * scale) + 0.5;
    const x1 = Math.round((i + 1) * 5000 * scale) + 0.5;
    const high = i % 2 === 1;
    const start = i === 0 ? `M${x0} 93.5` : high ? `M${x0} 93.5V74.5` : `M${x0} 74.5V93.5`;
    add(trace, "path", { d: `${start}H${x1}`, fill: "none", stroke: high ? "#30d040" : "#40d8e0" });
  }
}

function drawOverview() {
  const svg = document.getElementById("overview");
  const range = svg.clientWidth - 33;
  const scale = range / 100000;
  svg.replaceChildren();
  add(svg, "rect", { x: 16, width: range, height: 23, fill: "#a0a0a4" });
  drawScale(svg, { origin: 16, scale, step: 1000, end: 100000, bottom: 23, major: 17, middle: 10, minor: 5, baseline: 11 });
  add(svg, "path", { d: `M${Math.round(16 + 56151 * scale) + 0.5} 0v23`, stroke: "#e020e0" });
  add(svg, "path", { d: `M${16 + range - 1} 0v23`, stroke: "#20e8f0", "stroke-width": 2 });
}

function draw() {
  drawMain();
  drawOverview();
}

window.addEventListener("resize", draw);
draw();
```
